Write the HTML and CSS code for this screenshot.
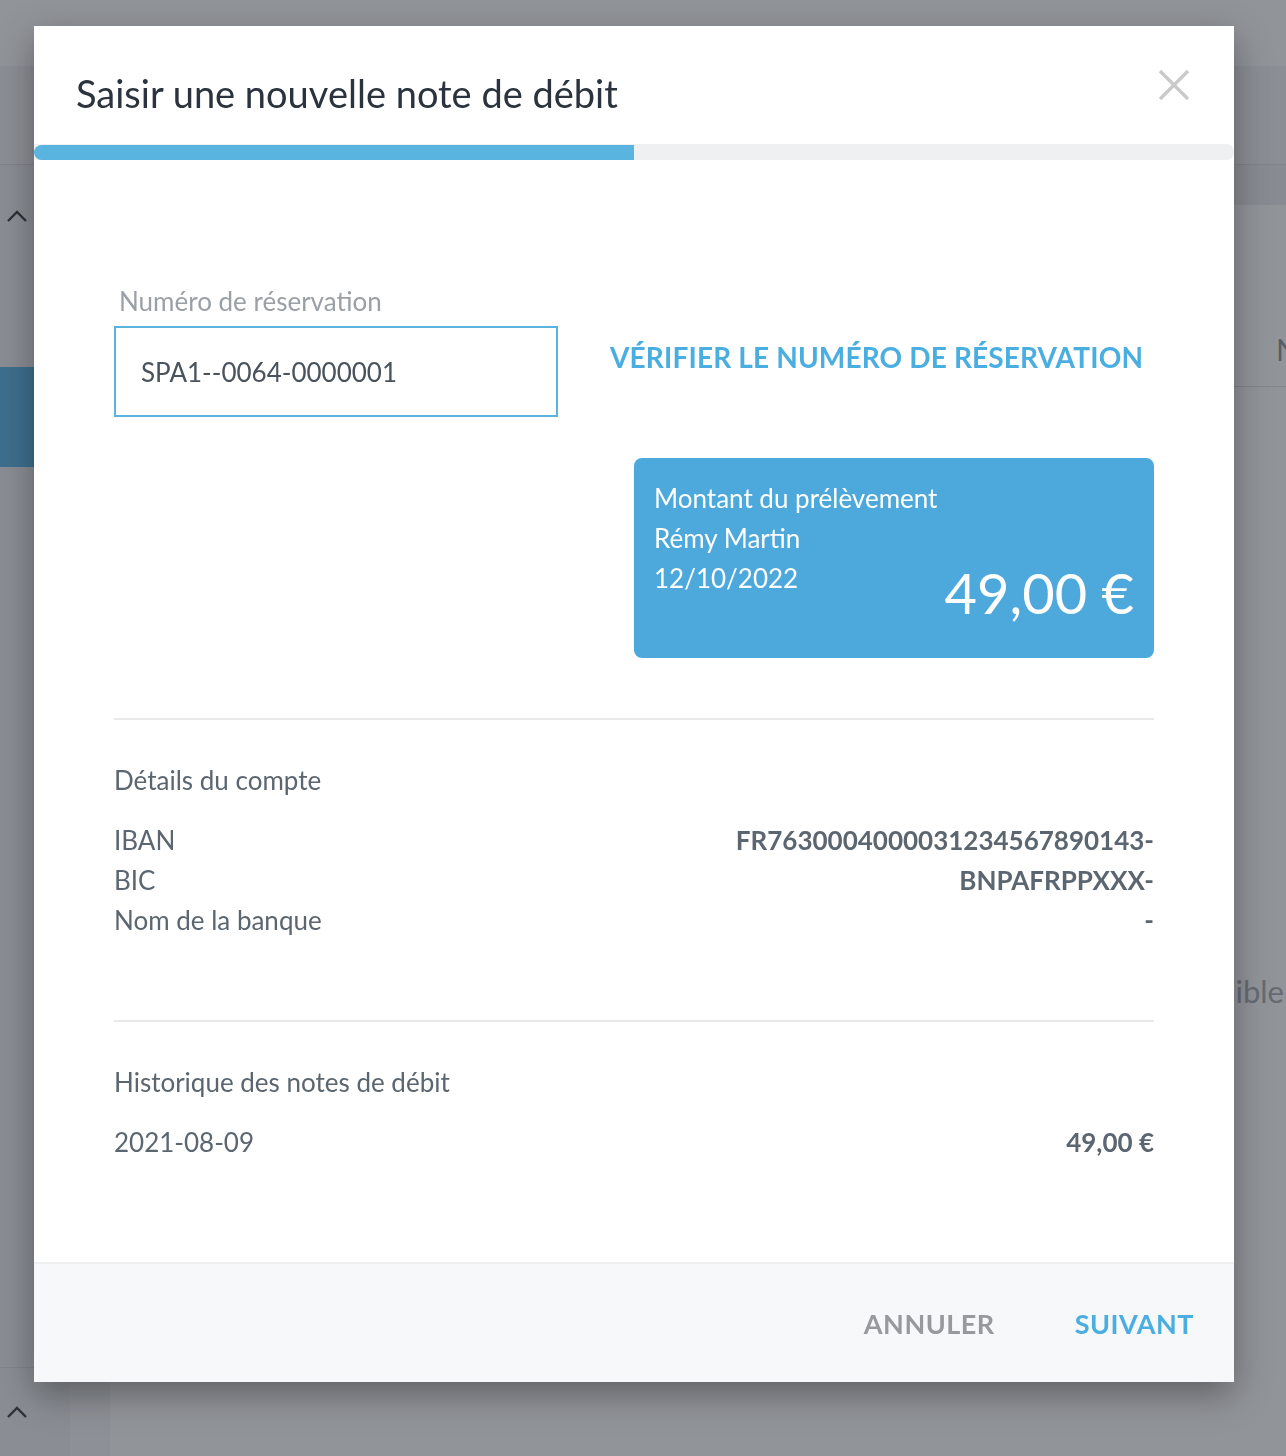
FILE: index.html
```html
<!DOCTYPE html>
<html lang="fr">
<head>
  <meta charset="UTF-8">
  <meta name="viewport" content="width=device-width, initial-scale=1.0">
  <title>Nouvelle note de débit</title>
  <link rel="stylesheet" href="styles.css">
</head>
<body>
  <div class="app">
    <header class="app-top"></header>
    <div class="app-sub"></div>
    <div class="app-main">
      <aside class="side">
        <div class="side-toggle">
          <svg width="22" height="14" viewBox="0 0 22 14"><path d="M2 12 L11 3 L20 12" fill="none" stroke="#393b3d" stroke-width="2.4"/></svg>
        </div>
        <div class="side-item"></div>
        <div class="side-foot">
          <svg width="22" height="14" viewBox="0 0 22 14"><path d="M2 12 L11 3 L20 12" fill="none" stroke="#393b3d" stroke-width="2.4"/></svg>
        </div>
      </aside>
      <div class="side-col"></div>
      <section class="content">
        <div class="content-bar"></div>
        <div class="table-head"><span>Nom</span></div>
        <p class="empty">Aucune note de débit disponible</p>
      </section>
    </div>
  </div>

  <div class="overlay">
    <div class="modal">
      <div class="modal-header">
        <h2 class="modal-title">Saisir une nouvelle note de débit</h2>
        <button class="close-btn" aria-label="Fermer">
          <svg width="32" height="32" viewBox="0 0 32 32"><path d="M2 2 L30 30 M30 2 L2 30" stroke="#c9c9c9" stroke-width="3.2"/></svg>
        </button>
      </div>
      <div class="progress"><div class="progress-bar" style="width: 50%"></div></div>

      <div class="modal-body">
        <div class="field-row">
          <div class="field">
            <label class="field-label">Numéro de réservation</label>
            <div class="field-input">SPA1--0064-0000001</div>
          </div>
          <a class="verify-link">VÉRIFIER LE NUMÉRO DE RÉSERVATION</a>
        </div>

        <div class="amount-card">
          <div class="amount-info">
            <div>Montant du prélèvement</div>
            <div>Rémy Martin</div>
            <div>12/10/2022</div>
          </div>
          <div class="amount-value">49,00 €</div>
        </div>

        <div class="section">
          <h3 class="section-title">Détails du compte</h3>
          <div class="info-row"><span>IBAN</span><strong>FR7630004000031234567890143-</strong></div>
          <div class="info-row"><span>BIC</span><strong>BNPAFRPPXXX-</strong></div>
          <div class="info-row"><span>Nom de la banque</span><strong>-</strong></div>
        </div>

        <div class="section">
          <h3 class="section-title">Historique des notes de débit</h3>
          <div class="info-row"><span>2021-08-09</span><strong>49,00 €</strong></div>
        </div>
      </div>

      <div class="modal-footer">
        <button class="btn btn-cancel">ANNULER</button>
        <button class="btn btn-next">SUIVANT</button>
      </div>
    </div>
  </div>
</body>
</html>
```

FILE: styles.css
```css
body {
  margin: 0;
  height: 1456px;
  overflow: hidden;
  font-family: Lato, "Liberation Sans", sans-serif;
  background: #fff;
}

/* app behind the dialog */
.app {
  height: 1456px;
  display: flex;
  flex-direction: column;
}
.app-top {
  height: 66px;
  background: #fff;
}
.app-sub {
  height: 98px;
  background: #f3f4f6;
  border-bottom: 1px solid #dcdfe3;
}
.app-main {
  flex: 1;
  display: flex;
}
.side {
  width: 70px;
  flex-shrink: 0;
  background: #f0f2f4;
  display: flex;
  flex-direction: column;
}
.side-toggle {
  height: 102px;
  padding-left: 6px;
  display: flex;
  align-items: center;
}
.side-item {
  margin-top: 100px;
  height: 100px;
  background: #59b5e9;
}
.side-foot {
  margin-top: auto;
  height: 88px;
  padding-left: 6px;
  border-top: 1px solid #dcdfe3;
  display: flex;
  align-items: center;
}
.side-col {
  width: 40px;
  flex-shrink: 0;
  background: #f6f7f8;
}
.content {
  flex: 1;
  min-width: 0;
  overflow: hidden;
  background: #fff;
}
.content-bar {
  height: 40px;
  background: #eceef1;
}
.table-head {
  height: 182px;
  border-bottom: 1px solid #dcdfe3;
  padding: 126px 0 0 1166px;
  box-sizing: border-box;
  white-space: nowrap;
  font-size: 30px;
  line-height: 36px;
  color: #8d9197;
}
.empty {
  margin: 585px 0 0;
  text-align: right;
  font-size: 31px;
  color: #a9acb0;
  padding-right: 2px;
}

/* dialog */
.overlay {
  position: fixed;
  inset: 0;
  background: rgba(35, 41, 51, 0.5);
  padding: 26px 0 0 34px;
}
.modal {
  width: 1200px;
  height: 1356px;
  background: #fff;
  display: flex;
  flex-direction: column;
  box-shadow: 0 12px 34px rgba(0, 0, 0, 0.35);
}
.modal-header {
  height: 118px;
  display: flex;
  justify-content: space-between;
  align-items: flex-start;
  padding: 0 44px 0 42px;
}
.modal-title {
  margin: 45px 0 0;
  font-size: 38px;
  line-height: 44px;
  font-weight: 400;
  color: #2b333f;
}
.close-btn {
  margin-top: 43px;
  padding: 0;
  border: none;
  background: none;
  width: 32px;
  height: 32px;
}
.progress {
  height: 16px;
  background: #eef0f1;
  border-radius: 0 8px 8px 0;
}
.progress-bar {
  height: 15px;
  margin-top: 1px;
  background: #5ab4e0;
  border-radius: 8px 0 0 8px;
}

.modal-body {
  flex: 1;
  padding: 0 80px;
  color: #5b6670;
}
.field-row {
  display: flex;
  align-items: flex-start;
  gap: 52px;
  margin-top: 125px;
}
.field {
  width: 444px;
}
.field-label {
  display: block;
  padding-left: 5px;
  margin-bottom: 9px;
  font-size: 26px;
  line-height: 32px;
  color: #9aa0a6;
}
.field-input {
  height: 91px;
  box-sizing: border-box;
  border: 2px solid #5ab4e0;
  padding-left: 25px;
  display: flex;
  align-items: center;
  font-size: 26px;
  line-height: 32px;
  color: #4a525b;
}
.verify-link {
  margin-top: 55px;
  font-size: 28px;
  line-height: 34px;
  font-weight: 700;
  letter-spacing: 0.15px;
  color: #4aaee0;
}

.amount-card {
  width: 520px;
  height: 200px;
  box-sizing: border-box;
  margin: 41px 0 0 auto;
  padding: 20px;
  border-radius: 8px;
  background: #4da9dc;
  color: #fff;
  display: flex;
  justify-content: space-between;
  align-items: flex-end;
}
.amount-info {
  align-self: flex-start;
  font-size: 26px;
  line-height: 40px;
}
.amount-value {
  font-size: 56px;
  line-height: 58px;
  margin-bottom: 16px;
}

.section {
  border-top: 2px solid #e8e9eb;
  margin-top: 60px;
  padding-top: 40px;
}
.section + .section {
  margin-top: 80px;
}
.section-title {
  margin: 0 0 20px;
  font-size: 26px;
  line-height: 40px;
  font-weight: 400;
}
.info-row {
  display: flex;
  justify-content: space-between;
  font-size: 26px;
  line-height: 40px;
}
.info-row strong {
  font-weight: 700;
}

.modal-footer {
  height: 120px;
  box-sizing: border-box;
  border-top: 2px solid #eef0f2;
  background: #f7f8fa;
  display: flex;
  justify-content: flex-end;
  align-items: center;
}
.btn {
  border: none;
  background: none;
  padding: 0 40px;
  font-family: inherit;
  font-size: 27px;
  font-weight: 700;
  letter-spacing: 0.5px;
}
.btn-cancel {
  color: #98999c;
}
.btn-next {
  color: #4aaee0;
}
```
